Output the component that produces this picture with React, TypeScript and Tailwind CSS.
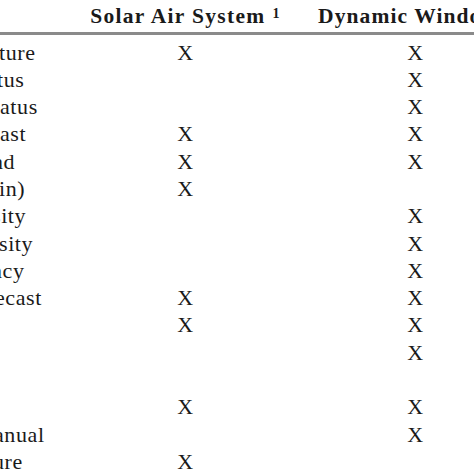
const rows: { label: string; shift: string; a: boolean; b: boolean }[] = [
  { label: "ture", shift: "ml-[-1px]", a: true, b: true },
  { label: "tus", shift: "ml-[-3px]", a: false, b: true },
  { label: "atus", shift: "ml-[0px]", a: false, b: true },
  { label: "ast", shift: "ml-[0px]", a: true, b: true },
  { label: "nd", shift: "ml-[-8px]", a: true, b: true },
  { label: "in)", shift: "ml-[-1px]", a: true, b: false },
  { label: "sity", shift: "ml-[-8px]", a: false, b: true },
  { label: "sity", shift: "ml-[-1px]", a: false, b: true },
  { label: "ncy", shift: "ml-[-9px]", a: false, b: true },
  { label: "ecast", shift: "ml-[-5px]", a: true, b: true },
  { label: "", shift: "ml-[0px]", a: true, b: true },
  { label: "", shift: "ml-[0px]", a: false, b: true },
  { label: "", shift: "ml-[0px]", a: false, b: false },
  { label: "", shift: "ml-[0px]", a: true, b: true },
  { label: "anual", shift: "ml-[-6px]", a: false, b: true },
  { label: "ure", shift: "ml-[-7px]", a: true, b: false },
];

export default function App() {
  return (
    <div className="w-[474px] h-[474px] overflow-hidden bg-white text-[#1a1a1a] font-['Liberation_Serif',serif]">
      <div className="w-[540px]">
        {/* header */}
        <div className="grid grid-cols-[80px_211px_249px] h-[32px] items-end pb-[4px] text-[21.5px] font-bold whitespace-nowrap">
          <div />
          <div className="flex justify-center">
            <span className="relative tracking-[1.3px]">
              Solar Air System
              <sup className="ml-[7px] text-[14px] relative top-[-5px]">1</sup>
            </span>
          </div>
          <div className="pl-[27px] tracking-[1.1px]">Dynamic Window Control</div>
        </div>
        <div className="h-[2.5px] bg-[#8a8a8a]" />
        <div className="pt-[1px]">
          {rows.map((r, i) => (
            <div
              key={i}
              className="grid grid-cols-[80px_211px_249px] h-[27.3px] items-center text-[22px] tracking-[0.6px] whitespace-nowrap"
            >
              <div className="overflow-hidden">
                <div className={r.shift}>{r.label}</div>
              </div>
              <div className="text-center">{r.a ? "X" : ""}</div>
              <div className="text-center">{r.b ? "X" : ""}</div>
            </div>
          ))}
        </div>
      </div>
    </div>
  );
}
